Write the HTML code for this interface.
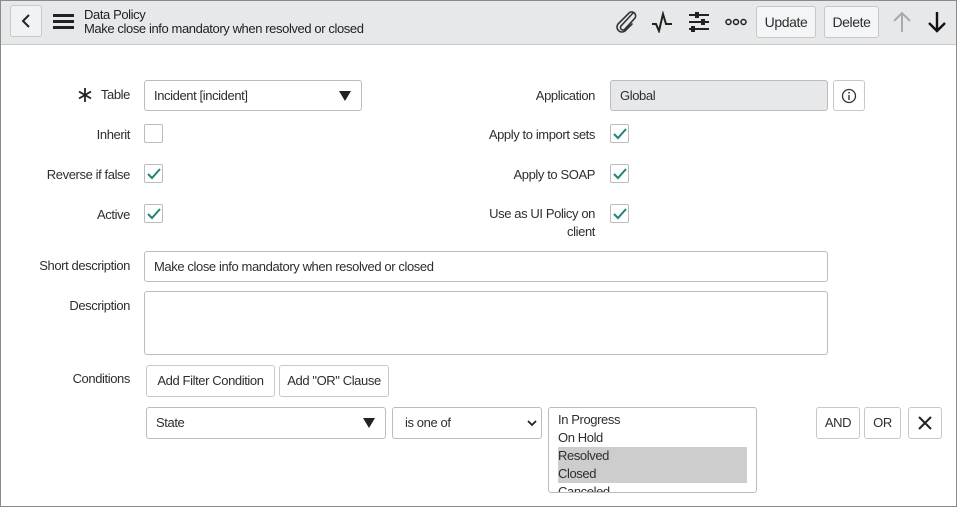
<!DOCTYPE html>
<html><head><style>
*{box-sizing:border-box;margin:0;padding:0}
body{width:957px;height:507px;overflow:hidden;font-family:"Liberation Sans",sans-serif;font-size:13px;letter-spacing:-0.4px;color:#2e2e2e;background:#fff}
.frame{position:absolute;left:0;top:0;width:957px;height:507px;border:1px solid #8a8a8a}
.hdr{position:absolute;left:1px;top:1px;width:955px;height:44px;background:#e7e8ea;border-bottom:1px solid #c9c9c9}
.a{position:absolute}
.btn{position:absolute;background:#f4f5f6;border:1px solid #c8c8c8;border-radius:3px;text-align:center;color:#2e2e2e}
.lbl{position:absolute;text-align:right;font-size:13px}
.inp{position:absolute;border:1px solid #bcbcbc;border-radius:3px;background:#fff;padding-left:9px}
.cb{position:absolute;width:19px;height:19px;border:1px solid #bcbcbc;border-radius:2px;background:#fff}
.wb{position:absolute;background:#fff;border:1px solid #c8c8c8;border-radius:3px;text-align:center}
</style></head><body>
<div class="hdr"></div>
<div class="btn" style="left:10px;top:5px;width:32px;height:32px;background:#f1f2f3"></div>
<svg class="a" style="left:18px;top:13px" width="16" height="16"><path d="M11 2 L5 8 L11 14" stroke="#222" stroke-width="2" fill="none"/></svg>
<svg class="a" style="left:53px;top:13px" width="21" height="17"><rect x="0" y="1" width="21" height="3" fill="#222"/><rect x="0" y="7" width="21" height="3" fill="#222"/><rect x="0" y="13" width="21" height="3" fill="#222"/></svg>
<div class="a" style="left:84px;top:7px;font-size:13px;color:#222">Data Policy</div>
<div class="a" style="left:84px;top:21px;font-size:13px;color:#222">Make close info mandatory when resolved or closed</div>
<svg class="a" style="left:613px;top:9px" width="26" height="26"><path d="M20 4 L8 17 a2.5 2.5 0 0 0 3.5 3.5 L22 9 a4 4 0 0 0-5.5-5.5 L5 15 a5 5 0 0 0 7 7 L19 15" stroke="#333" stroke-width="1.6" fill="none" stroke-linecap="round"/></svg>
<svg class="a" style="left:651px;top:11px" width="24" height="22"><path d="M1 13 L5 13 L8 20 L12 3 L15 13 L21 13" stroke="#222" stroke-width="2" fill="none"/></svg>
<svg class="a" style="left:688px;top:10px" width="22" height="24"><g stroke="#222" stroke-width="2"><line x1="1" y1="5" x2="21" y2="5"/><line x1="1" y1="12" x2="21" y2="12"/><line x1="1" y1="19" x2="21" y2="19"/></g><rect x="7" y="2" width="4" height="6" fill="#222"/><rect x="13" y="9" width="4" height="6" fill="#222"/><rect x="3" y="16" width="4" height="6" fill="#222"/></svg>
<svg class="a" style="left:725px;top:18px" width="22" height="8"><g stroke="#222" stroke-width="1.5" fill="none"><circle cx="3.5" cy="4" r="2.5"/><circle cx="11" cy="4" r="2.5"/><circle cx="18.5" cy="4" r="2.5"/></g></svg>
<div class="btn" style="left:756px;top:6px;width:60px;height:32px;line-height:30px;font-size:14px">Update</div>
<div class="btn" style="left:824px;top:6px;width:55px;height:32px;line-height:30px;font-size:14px">Delete</div>
<svg class="a" style="left:892px;top:11px" width="20" height="22"><path d="M10 21 V2 M2 10 L10 2 L18 10" stroke="#aaa" stroke-width="2" fill="none"/></svg>
<svg class="a" style="left:927px;top:11px" width="20" height="22"><path d="M10 1 V20 M2 12 L10 20 L18 12" stroke="#111" stroke-width="2.4" fill="none"/></svg>

<svg class="a" style="left:78px;top:88px" width="14" height="14"><g stroke="#222" stroke-width="1.8"><line x1="7" y1="0" x2="7" y2="14"/><line x1="1" y1="3.5" x2="13" y2="10.5"/><line x1="1" y1="10.5" x2="13" y2="3.5"/></g></svg>
<div class="lbl" style="left:90px;top:87px;width:40px">Table</div>
<div class="inp" style="left:144px;top:80px;width:218px;height:31px;line-height:29px">Incident [incident]</div>
<svg class="a" style="left:339px;top:91px" width="12" height="10"><path d="M0 0 H12 L6 10Z" fill="#222"/></svg>

<div class="lbl" style="left:0;top:127px;width:130px">Inherit</div>
<div class="cb" style="left:144px;top:124px"></div>
<div class="lbl" style="left:0;top:167px;width:130px">Reverse if false</div>
<div class="cb" style="left:144px;top:164px"></div>
<div class="lbl" style="left:0;top:207px;width:130px">Active</div>
<div class="cb" style="left:144px;top:204px"></div>

<div class="lbl" style="left:400px;top:88px;width:195px">Application</div>
<div class="inp" style="left:610px;top:80px;width:218px;height:31px;line-height:29px;background:#e7e8ea">Global</div>
<div class="wb" style="left:833px;top:80px;width:32px;height:31px"></div>
<svg class="a" style="left:841px;top:88px" width="16" height="16"><circle cx="8" cy="8" r="6.5" stroke="#333" stroke-width="1.3" fill="none"/><rect x="7.3" y="7" width="1.4" height="5" fill="#333"/><circle cx="8" cy="4.8" r="0.9" fill="#333"/></svg>
<div class="lbl" style="left:400px;top:127px;width:195px">Apply to import sets</div>
<div class="cb" style="left:610px;top:124px"></div>
<div class="lbl" style="left:400px;top:167px;width:195px">Apply to SOAP</div>
<div class="cb" style="left:610px;top:164px"></div>
<div class="lbl" style="left:400px;top:207px;width:195px;line-height:18px;top:205px">Use as UI Policy on<br>client</div>
<div class="cb" style="left:610px;top:204px"></div>

<svg class="a" style="left:147px;top:168px" width="14" height="12"><path d="M1 6 L5 10 L13 1" stroke="#1f8476" stroke-width="2" fill="none"/></svg>
<svg class="a" style="left:147px;top:208px" width="14" height="12"><path d="M1 6 L5 10 L13 1" stroke="#1f8476" stroke-width="2" fill="none"/></svg>
<svg class="a" style="left:613px;top:128px" width="14" height="12"><path d="M1 6 L5 10 L13 1" stroke="#1f8476" stroke-width="2" fill="none"/></svg>
<svg class="a" style="left:613px;top:168px" width="14" height="12"><path d="M1 6 L5 10 L13 1" stroke="#1f8476" stroke-width="2" fill="none"/></svg>
<svg class="a" style="left:613px;top:208px" width="14" height="12"><path d="M1 6 L5 10 L13 1" stroke="#1f8476" stroke-width="2" fill="none"/></svg>

<div class="lbl" style="left:0;top:258px;width:130px">Short description</div>
<div class="inp" style="left:144px;top:251px;width:684px;height:31px;line-height:29px">Make close info mandatory when resolved or closed</div>
<div class="lbl" style="left:0;top:298px;width:130px">Description</div>
<div class="inp" style="left:144px;top:291px;width:684px;height:64px"></div>

<div class="lbl" style="left:0;top:371px;width:130px">Conditions</div>
<div class="wb" style="left:146px;top:365px;width:129px;height:32px;line-height:30px">Add Filter Condition</div>
<div class="wb" style="left:279px;top:365px;width:110px;height:32px;line-height:30px">Add "OR" Clause</div>

<div class="inp" style="left:146px;top:407px;width:240px;height:32px;line-height:30px">State</div>
<svg class="a" style="left:363px;top:418px" width="12" height="10"><path d="M0 0 H12 L6 10Z" fill="#222"/></svg>
<div class="inp" style="left:392px;top:407px;width:150px;height:32px;line-height:30px;padding-left:12px">is one of</div>
<svg class="a" style="left:526px;top:419px" width="12" height="8"><path d="M2 2 L6 6 L10 2" stroke="#222" stroke-width="1.8" fill="none"/></svg>
<div class="inp" style="left:548px;top:407px;width:209px;height:86px;overflow:hidden;padding:3px 9px;line-height:18px">
<div>In Progress</div><div>On Hold</div>
<div style="background:#cdcdcd">Resolved</div><div style="background:#cdcdcd">Closed</div><div>Canceled</div></div>

<div class="wb" style="left:816px;top:407px;width:44px;height:32px;line-height:30px">AND</div>
<div class="wb" style="left:864px;top:407px;width:37px;height:32px;line-height:30px">OR</div>
<div class="wb" style="left:908px;top:407px;width:34px;height:32px"></div>
<svg class="a" style="left:918px;top:416px" width="14" height="14"><path d="M1 1 L13 13 M13 1 L1 13" stroke="#222" stroke-width="2"/></svg>
<div class="frame"></div>
</body></html>
